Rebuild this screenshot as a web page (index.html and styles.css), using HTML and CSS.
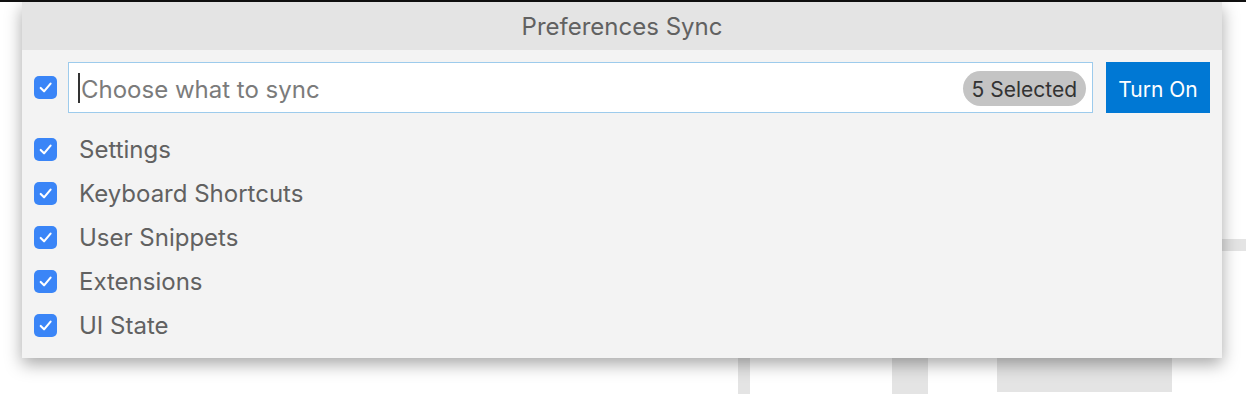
FILE: index.html
```html
<!DOCTYPE html>
<html lang="en">
<head>
    <meta charset="UTF-8">
    <title>Preferences Sync</title>
    <link rel="stylesheet" href="styles.css">
</head>
<body>
    <div class="workbench">
        <div class="topline"></div>
        <div class="bg-bar bar-h"></div>
        <div class="bg-bar bar-1"></div>
        <div class="bg-bar bar-2"></div>
        <div class="bg-bar bar-3"></div>
    </div>

    <div class="quick-input">
        <div class="qi-title">Preferences Sync</div>
        <div class="qi-header">
            <span class="check"><svg viewBox="0 0 24 24"><path d="M7 12.5l3.5 3.5 6.8-8" /></svg></span>
            <div class="qi-box">
                <span class="caret"></span>
                <span class="placeholder">Choose what to sync</span>
                <span class="badge">5 Selected</span>
            </div>
            <button class="btn">Turn On</button>
        </div>
        <div class="qi-list">
            <div class="row"><span class="check"><svg viewBox="0 0 24 24"><path d="M7 12.5l3.5 3.5 6.8-8" /></svg></span><span class="label">Settings</span></div>
            <div class="row"><span class="check"><svg viewBox="0 0 24 24"><path d="M7 12.5l3.5 3.5 6.8-8" /></svg></span><span class="label">Keyboard Shortcuts</span></div>
            <div class="row"><span class="check"><svg viewBox="0 0 24 24"><path d="M7 12.5l3.5 3.5 6.8-8" /></svg></span><span class="label">User Snippets</span></div>
            <div class="row"><span class="check"><svg viewBox="0 0 24 24"><path d="M7 12.5l3.5 3.5 6.8-8" /></svg></span><span class="label">Extensions</span></div>
            <div class="row"><span class="check"><svg viewBox="0 0 24 24"><path d="M7 12.5l3.5 3.5 6.8-8" /></svg></span><span class="label">UI State</span></div>
        </div>
    </div>
</body>
</html>
```

FILE: styles.css
```css
html, body {
    margin: 0;
    padding: 0;
}
body {
    width: 1246px;
    height: 394px;
    overflow: hidden;
    background: #fff;
    font-family: Inter, "Liberation Sans", sans-serif;
    color: #616161;
    position: relative;
}

/* editor behind the overlay */
.topline {
    height: 2px;
    background: #111;
}
.bg-bar {
    position: absolute;
    background: #e4e4e4;
}
.bar-h { left: 1200px; top: 239px; width: 46px; height: 12px; }
.bar-1 { left: 738px; top: 340px; width: 12px; height: 54px; }
.bar-2 { left: 892px; top: 340px; width: 36px; height: 54px; }
.bar-3 { left: 997px; top: 340px; width: 175px; height: 52px; }

/* quick input widget */
.quick-input {
    position: absolute;
    left: 22px;
    top: 2px;
    width: 1200px;
    height: 356px;
    background: #f3f3f3;
    box-shadow: 0 6px 16px rgba(0, 0, 0, 0.35);
}
.qi-title {
    height: 48px;
    background: #e4e4e4;
    text-align: center;
    line-height: 50px;
    font-size: 24px;
}
.qi-header {
    display: flex;
    align-items: center;
    padding: 12px 12px 0 12px;
    gap: 11px;
}
.check {
    width: 23px;
    height: 23px;
    flex: none;
    border-radius: 5px;
    background: #3a85f7;
    display: flex;
}
.check svg {
    width: 23px;
    height: 23px;
    fill: none;
    stroke: #fff;
    stroke-width: 2.2;
    stroke-linecap: round;
    stroke-linejoin: round;
}
.qi-box {
    flex: 1;
    height: 49px;
    box-sizing: border-box;
    height: 51px;
    padding: 3px 6px 0 9px;
    background: #fff;
    border: 1px solid #9dcbec;
    display: flex;
    align-items: center;
}
.caret {
    width: 2px;
    height: 30px;
    margin-top: -3px;
    background: #333;
}
.placeholder {
    flex: 1;
    font-size: 24px;
    color: #7b7b7b;
    margin-left: 1px;
}
.badge {
    background: #c4c4c4;
    color: #333;
    font-size: 21px;
    height: 35px;
    line-height: 37px;
    margin-top: -1px;
    padding: 0 9px;
    border-radius: 18px;
}
.btn {
    width: 104px;
    height: 51px;
    margin-left: 2px;
    border: none;
    background: #0078d4;
    color: #fff;
    font-family: inherit;
    font-size: 21px;
    padding: 4px 0 0 0;
}
.qi-list {
    padding: 14px 0 0 12px;
}
.row {
    height: 44px;
    display: flex;
    align-items: center;
    gap: 22px;
}
.label {
    font-size: 24px;
}
```
